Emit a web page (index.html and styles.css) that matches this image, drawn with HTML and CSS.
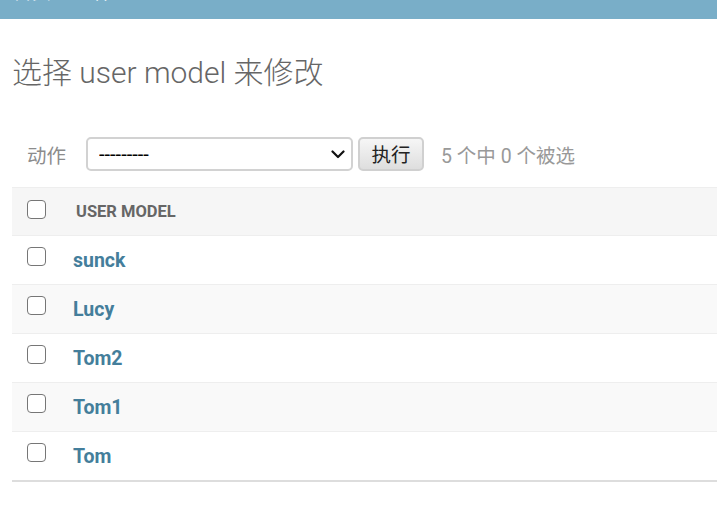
FILE: index.html
```html
<!DOCTYPE html>
<html lang="zh-CN">
<head>
<meta charset="utf-8">
<title>选择 user model 来修改</title>
<link rel="stylesheet" href="styles.css">
</head>
<body>
<div class="breadcrumbs"><div class="crumbs">首页 › 一件</div></div>
<main class="content">
  <h1 class="title">选择 user model 来修改</h1>
  <div class="actions">
    <label class="action-label">动作</label>
    <div class="select-wrap">
      <select class="action-select"><option>---------</option></select>
      <svg class="chevron" width="14" height="9" viewBox="0 0 14 9"><path d="M1.5 1.5 L7 7 L12.5 1.5" fill="none" stroke="#111" stroke-width="2.2" stroke-linecap="round" stroke-linejoin="round"/></svg>
    </div>
    <button class="go-btn">执行</button>
    <span class="counter">5 个中 0 个被选</span>
  </div>
  <table class="results">
    <thead>
      <tr><th class="cb-cell"><input type="checkbox" class="cb"></th><th class="col-head">USER MODEL</th></tr>
    </thead>
    <tbody>
      <tr><td class="cb-cell"><input type="checkbox" class="cb"></td><td class="name"><a href="#">sunck</a></td></tr>
      <tr class="alt"><td class="cb-cell"><input type="checkbox" class="cb"></td><td class="name"><a href="#">Lucy</a></td></tr>
      <tr><td class="cb-cell"><input type="checkbox" class="cb"></td><td class="name"><a href="#">Tom2</a></td></tr>
      <tr class="alt"><td class="cb-cell"><input type="checkbox" class="cb"></td><td class="name"><a href="#">Tom1</a></td></tr>
      <tr class="last"><td class="cb-cell"><input type="checkbox" class="cb"></td><td class="name"><a href="#">Tom</a></td></tr>
    </tbody>
  </table>
</main>
</body>
</html>
```
FILE: styles.css
```css
html, body {
  margin: 0;
  padding: 0;
  background: #fff;
  overflow: hidden;
}
body {
  font-family: Roboto, "Noto Sans CJK SC", sans-serif;
  color: #333;
}
.breadcrumbs {
  height: 19px;
  background: #79aec8;
  overflow: hidden;
}
.crumbs {
  margin-top: -17px;
  padding-left: 13px;
  font-size: 19px;
  line-height: 19px;
  color: #fff;
  white-space: nowrap;
  word-spacing: 4px;
}
.content {
  padding: 36px 0 0 12px;
}
.title {
  margin: 0;
  font-size: 30px;
  line-height: 36px;
  font-weight: 300;
  color: #666;
}
.actions {
  display: flex;
  align-items: center;
  margin-top: 46px;
  padding-left: 15px;
  height: 34px;
}
.action-label {
  font-size: 19.5px;
  color: #8c8c8c;
  margin-right: 20px;
}
.select-wrap {
  position: relative;
  display: flex;
}
.action-select {
  appearance: none;
  -webkit-appearance: none;
  width: 267px;
  height: 34px;
  box-sizing: border-box;
  border: 2px solid #d2d2d2;
  border-radius: 5px;
  background: #fff;
  padding: 0 0 0 11px;
  font-family: Roboto, sans-serif;
  font-size: 20px;
  color: #000;
}
.chevron {
  position: absolute;
  right: 8px;
  top: 13px;
}
.go-btn {
  margin-left: 5px;
  height: 34px;
  width: 66px;
  box-sizing: border-box;
  border: 2px solid #d0d0d0;
  border-radius: 5px;
  background: linear-gradient(#f6f6f6, #dedede);
  font-family: "Noto Sans CJK SC", sans-serif;
  font-size: 19.5px;
  color: #222;
  padding: 0;
  line-height: 30px;
}
.counter {
  margin-left: 17px;
  font-size: 19.5px;
  color: #999;
}
.results {
  margin-top: 16px;
  width: 100%;
  border-collapse: collapse;
}
.results th, .results td {
  padding: 0;
  text-align: left;
  vertical-align: middle;
}
thead tr {
  background: #f6f6f6;
  border-top: 1px solid #eee;
  border-bottom: 1px solid #eee;
}
thead th {
  height: 47px;
}
.cb-cell {
  width: 49px;
  padding-left: 15px !important;
  box-sizing: border-box;
}
.cb {
  appearance: none;
  -webkit-appearance: none;
  display: block;
  width: 19px;
  height: 19px;
  box-sizing: border-box;
  border: 1.5px solid #767676;
  border-radius: 4px;
  background: #fff;
  margin: 0 0 7px 0;
}
thead .cb {
  margin-bottom: 4px;
}
.col-head {
  padding-left: 15px !important;
  font-size: 16.5px;
  line-height: 20px;
  font-weight: 700;
  color: #666;
}
tbody tr {
  border-bottom: 1px solid #eee;
}
tbody tr.alt {
  background: #f9f9f9;
}
tbody tr.last {
  border-bottom: 2px solid #ddd;
}
tbody td {
  height: 48px;
}
tbody td.name {
  height: 46px;
  padding: 2px 0 0 12px;
  font-size: 19.5px;
  line-height: 24px;
}
.name a {
  color: #447e9b;
  font-weight: 700;
  text-decoration: none;
}
```
